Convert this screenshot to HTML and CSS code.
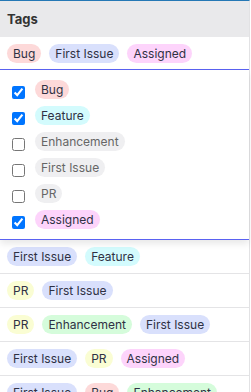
FILE: index.html
```
<!DOCTYPE html>
<html lang="en">
<head>
    <meta charset="UTF-8">
    <meta name="viewport" content="width=device-width, initial-scale=1.0">
    <title>Tags</title>
    <link rel="stylesheet" href="styles.css">
</head>
<body>
    <div class="table">
        <div class="header">Tags</div>
        <div class="row editing">
            <span class="tag bug">Bug</span>
            <span class="tag first">First Issue</span>
            <span class="tag assigned">Assigned</span>

            <div class="popup">
                <label class="option"><input type="checkbox" checked><span class="tag bug">Bug</span></label>
                <label class="option"><input type="checkbox" checked><span class="tag feature">Feature</span></label>
                <label class="option"><input type="checkbox"><span class="tag off">Enhancement</span></label>
                <label class="option"><input type="checkbox"><span class="tag off">First Issue</span></label>
                <label class="option"><input type="checkbox"><span class="tag off">PR</span></label>
                <label class="option"><input type="checkbox" checked><span class="tag assigned">Assigned</span></label>
            </div>
        </div>
        <!-- rows under the popup -->
        <div class="row"><span class="tag bug">Bug</span></div>
        <div class="row"><span class="tag pr">PR</span></div>
        <div class="row"><span class="tag feature">Feature</span></div>
        <div class="row"><span class="tag first">First Issue</span></div>
        <div class="row"><span class="tag enh">Enhancement</span></div>

        <div class="row">
            <span class="tag first">First Issue</span>
            <span class="tag feature">Feature</span>
        </div>
        <div class="row">
            <span class="tag pr">PR</span>
            <span class="tag first">First Issue</span>
        </div>
        <div class="row">
            <span class="tag pr">PR</span>
            <span class="tag enh">Enhancement</span>
            <span class="tag first">First Issue</span>
        </div>
        <div class="row">
            <span class="tag first">First Issue</span>
            <span class="tag pr">PR</span>
            <span class="tag assigned">Assigned</span>
        </div>
        <div class="row">
            <span class="tag first">First Issue</span>
            <span class="tag bug">Bug</span>
            <span class="tag enh">Enhancement</span>
        </div>
    </div>
</body>
</html>
```

FILE: styles.css
```
body {
    margin: 0;
    background-color: white;
    font-family: Inter, "Noto Sans", sans-serif;
    overflow: hidden;
}
.table {
    width: 249px;
    border-top: 1px solid #2578b5;
    border-right: 1px solid #e2e2e4;
}
.header {
    height: 36px;
    display: flex;
    align-items: center;
    padding-left: 7px;
    background-color: #e9e9eb;
    font-size: 13px;
    font-weight: 700;
    color: #333;
}
.row {
    height: 33px;
    display: flex;
    align-items: center;
    gap: 8px;
    padding-left: 7px;
    border-bottom: 1px solid #e4e4e6;
    position: relative;
}
.row.editing {
    height: 32px;
    border-bottom: 1px solid #5a62f2;
}
.tag {
    display: inline-block;
    height: 19px;
    line-height: 19px;
    padding: 0 6px;
    border-radius: 10px;
    font-size: 12px;
    color: #2f3144;
    white-space: nowrap;
}
.bug { background-color: #fdd9d9; }
.first { background-color: #d9e0fc; }
.assigned { background-color: #fdd4fb; }
.feature { background-color: #d3fbfd; }
.pr { background-color: #fafdd3; }
.enh { background-color: #d5fcdb; }
.off {
    background-color: #efeff1;
    color: #666;
}
.popup {
    position: absolute;
    top: 33px;
    left: 0;
    width: 249px;
    height: 159px;
    padding-top: 10px;
    box-sizing: content-box;
    background-color: white;
    border-bottom: 1px solid #5a62f2;
    box-shadow: 0 4px 7px rgba(0, 0, 0, 0.09);
    z-index: 10;
    display: flex;
    flex-direction: column;
    gap: 7px;
}
.option {
    display: flex;
    align-items: center;
    gap: 10px;
    padding-left: 12px;
}
.option input {
    width: 13px;
    height: 13px;
    margin: 6px 0 0 0;
}
```
